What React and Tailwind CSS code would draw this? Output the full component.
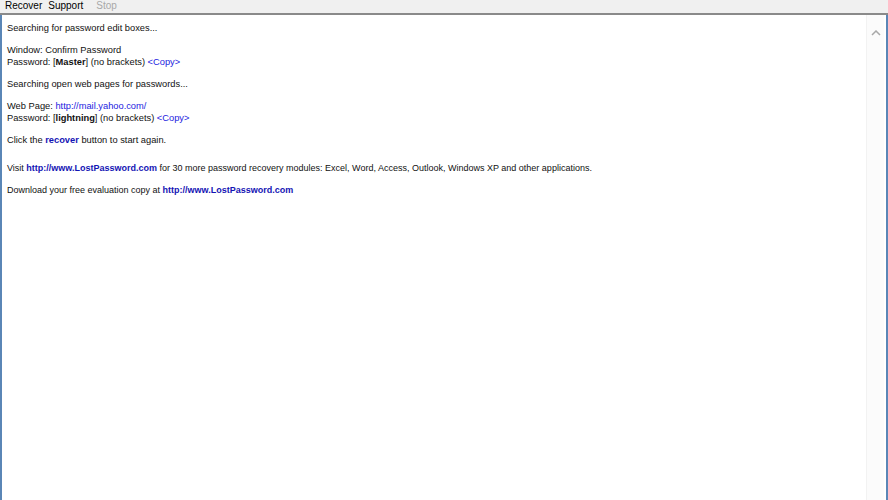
import React from "react";

export default function App() {
  const link = "text-[#1c1ce0]";
  const boldLink = "font-bold text-[#1414b4]";
  return (
    <div className="w-[888px] h-[500px] bg-white flex flex-col overflow-hidden" style={{ fontFamily: '"Liberation Sans", Arial, sans-serif' }}>
      <div className="h-[13px] bg-[#f0f0f0] flex items-start pl-[5px] text-[10px] leading-[11px] text-black overflow-hidden">
        <span>Recover</span>
        <span className="ml-[6px]">Support</span>
        <span className="ml-[13px] text-[#a8a8a8]">Stop</span>
      </div>
      <div className="h-[2px] bg-[#8a8a8a]" />
      <div className="flex-1 flex">
        <div className="w-[2px] bg-[#5a86b6]" />
        <div className="flex-1 pl-[5px] pt-[8px] text-[9.3px] leading-[11.2px] text-[#111]">
          <div>Searching for password edit boxes...</div>
          <div className="h-[11.2px]" />
          <div>Window: Confirm Password</div>
          <div>Password: [<b>Master</b>] (no brackets) <span className={link}>&lt;Copy&gt;</span></div>
          <div className="h-[11.2px]" />
          <div>Searching open web pages for passwords...</div>
          <div className="h-[11.2px]" />
          <div>Web Page: <span className={link}>http://mail.yahoo.com/</span></div>
          <div>Password: [<b>lightning</b>] (no brackets) <span className={link}>&lt;Copy&gt;</span></div>
          <div className="h-[11.2px]" />
          <div>Click the <span className={boldLink}>recover</span> button to start again.</div>
          <div className="mt-[17px] text-[9px] leading-[11px]">
            Visit <span className={boldLink}>http://www.LostPassword.com</span> for 30 more password recovery modules: Excel, Word, Access, Outlook, Windows XP and other applications.
          </div>
          <div className="mt-[11px] text-[9px] leading-[11px]">
            Download your free evaluation copy at <span className={boldLink}>http://www.LostPassword.com</span>
          </div>
        </div>
        <div className="w-[18px] bg-[#fbfbfb] border-l border-[#f2f2f2] flex flex-col items-center pt-[15px]">
          <svg width="10" height="6" viewBox="0 0 10 6">
            <path d="M1 5 L5 1 L9 5" fill="none" stroke="#a8a8a8" strokeWidth="1.5" />
          </svg>
        </div>
        <div className="w-[2px]" />
        <div className="w-[2px] bg-[#5a86b6]" />
      </div>
    </div>
  );
}
